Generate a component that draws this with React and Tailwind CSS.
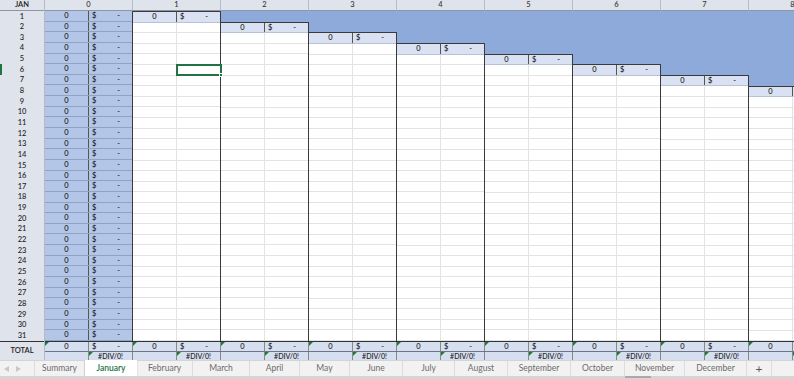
import React from 'react'

const tabs = [
  ['Summary', 50],
  ['January', 52],
  ['February', 56],
  ['March', 57],
  ['April', 50],
  ['May', 50],
  ['June', 53],
  ['July', 52],
  ['August', 53],
  ['September', 63],
  ['October', 54],
  ['November', 60],
  ['December', 62],
]

const ROW_H = 10.645
const days = Array.from({ length: 31 }, (_, i) => i + 1)
const groups = [0, 1, 2, 3, 4, 5, 6, 7, 8]

const Tri = () => (
  <span className="absolute top-0 left-0 w-0 h-0 border-t-[4px] border-r-[4px] border-t-[#1f7a36] border-r-transparent" />
)

const Money = () => (
  <div className="flex-1 flex items-center justify-between pl-[3px] pr-[12px]">
    <span>$</span>
    <span>-</span>
  </div>
)

// row numbers + JAN / TOTAL labels
const RowLabels = () => (
  <div className="flex flex-col w-[45px] shrink-0 bg-[#dfe3ec] border-r border-[#b3b9c5] text-[#222]">
    <div className="h-[11px] flex items-center justify-center border-b border-[#8e96a4] text-[7.5px] font-semibold leading-none">JAN</div>
    <div className="h-[330px] flex flex-col">
      {days.map(d => (
        <div key={d} className="flex-1 relative flex items-center justify-center text-[7.5px] font-medium leading-none">
          {d === 6 && <span className="absolute left-0 top-0 bottom-0 w-[2px] bg-[#217346]" />}
          {d}
        </div>
      ))}
    </div>
    <div className="h-[19px] border-t border-[#333] flex items-center justify-center text-[7.5px] font-semibold leading-none">TOTAL</div>
  </div>
)

const Group = ({ k }) => (
  <div className="flex flex-col w-[88px] shrink-0 text-[7.5px] font-medium leading-none text-[#1a1a1a]">
    <div className="h-[11px] bg-[#dfe3ec] border-r border-b border-r-[#b7bdc8] border-b-[#8e96a4] flex items-center justify-center text-[#333]">
      {k}
    </div>

    {k === 0 ? (
      <div className="h-[330px] flex flex-col bg-[#b4c6e7] border-r border-[#3a3a3a]">
        {days.map(d => (
          <div key={d} className="flex-1 flex border-b border-[#8fa3c6]">
            <div className="w-[44px] flex items-center justify-center border-r border-[#555]">0</div>
            <Money />
          </div>
        ))}
      </div>
    ) : (
      <div className="h-[330px] flex flex-col">
        <div className="bg-[#8eaadb] shrink-0" style={{ height: (k - 1) * ROW_H }} />
        <div className="flex-1 flex flex-col border-t border-r border-[#3a3a3a] bg-white">
          <div className="flex-1 flex bg-[#d9e1f2] border-b border-[#b8c2d6]">
            <div className="w-[44px] flex items-center justify-center border-r border-[#555]">0</div>
            <Money />
          </div>
          {days.slice(k).map(d => (
            <div key={d} className="flex-1 flex border-b border-[#e3e3e3]">
              <div className="w-[44px] border-r border-[#e3e3e3]" />
            </div>
          ))}
        </div>
      </div>
    )}

    <div className="h-[19px] flex flex-col border-t border-[#333] bg-[#d6dff0]">
      <div className="h-[10px] flex border-b border-[#6d7585]">
        <div className="relative w-[44px] flex items-center justify-center border-r border-[#888]">
          <Tri />0
        </div>
        <div className="flex-1 flex border-r border-[#888]">
          <Money />
        </div>
      </div>
      <div className="flex-1 flex">
        <div className="w-[44px] border-r border-[#888]" />
        <div className="relative flex-1 flex items-center justify-center border-r border-[#888] text-[7px]">
          <Tri />#DIV/0!
        </div>
      </div>
    </div>
  </div>
)

const TabBar = () => (
  <div className="flex flex-col">
    <div className="h-[16px] flex bg-[#f2f2f2] border-t border-[#d4d4d4] text-[8.5px] text-[#6b6b6b] leading-none">
      <div className="w-[35px] flex items-center gap-[7px] pl-[4px] border-r border-[#dcdcdc]">
        <svg width="5" height="6" viewBox="0 0 5 6"><path d="M5 0 L0 3 L5 6 Z" fill="#c8c8c8" /></svg>
        <svg width="5" height="6" viewBox="0 0 5 6"><path d="M0 0 L5 3 L0 6 Z" fill="#c8c8c8" /></svg>
      </div>
      {tabs.map(([name, w]) => (
        <div
          key={name}
          style={{ width: w }}
          className={
            name === 'January'
              ? 'shrink-0 flex items-center justify-center bg-white text-[#217346] font-semibold -mt-px shadow-[0_1px_2px_rgba(0,0,0,0.15)]'
              : 'shrink-0 flex items-center justify-center border-r border-[#dcdcdc]'
          }
        >
          {name}
        </div>
      ))}
      <div className="w-[25px] flex items-center justify-center border-r border-[#dcdcdc] text-[12px] text-[#555]">+</div>
      <div className="flex-1" />
    </div>
    <div className="h-[3px] bg-[#d5d5d5] relative">
      <span className="absolute left-[625px] top-0 h-[2px] w-[26px] bg-[#aaaaaa]" />
    </div>
  </div>
)

export default function App() {
  return (
    <div className="relative w-[794px] h-[379px] overflow-hidden bg-white font-['Lato','Liberation_Sans',sans-serif]">
      <div className="flex h-[360px] overflow-hidden">
        <RowLabels />
        {groups.map(k => (
          <Group key={k} k={k} />
        ))}
      </div>
      <TabBar />

      {/* selected cell */}
      <div className="absolute left-[176px] top-[63.5px] w-[46px] h-[12px] border-2 border-[#217346]">
        <span className="absolute -right-[3px] -bottom-[3px] w-[4px] h-[4px] bg-[#217346] border border-white" />
      </div>
    </div>
  )
}
